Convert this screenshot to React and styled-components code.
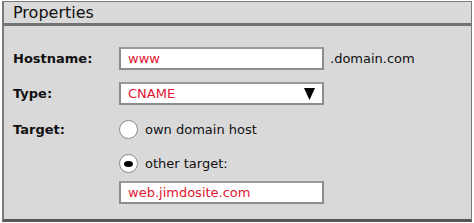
import React from 'react';
import styled, { createGlobalStyle } from 'styled-components';

const GlobalStyle = createGlobalStyle`
  body {
    margin: 0;
    background: #ffffff;
    font-family: "DejaVu Sans", Verdana, sans-serif;
  }
`;

const Panel = styled.div`
  margin: 1px 0 0 2px;
  width: 470px;
  height: 221px;
  box-sizing: border-box;
  background: #d9d9d9;
  border: 1px solid #7a7a7a;
  border-left: 2px solid #7a7a7a;
  border-bottom: 3px solid #555555;
  display: flex;
  flex-direction: column;
`;

const Header = styled.div`
  height: 21px;
  line-height: 21px;
  padding-left: 9px;
  font-size: 16px;
  color: #111;
  background: #dadada;
  border-bottom: 3px solid #737373;
`;

const Body = styled.div`
  padding: 21px 0 0 9px;
  display: flex;
  flex-direction: column;
`;

const Row = styled.div`
  display: flex;
  align-items: ${p => (p.top ? 'flex-start' : 'center')};
  margin-bottom: ${p => p.gap ?? 12}px;
`;

const Label = styled.div`
  width: 106px;
  flex: none;
  font-size: 13px;
  font-weight: bold;
  color: #111;
  line-height: 23px;
`;

const Field = styled.div`
  width: 205px;
  height: 23px;
  box-sizing: border-box;
  background: #fff;
  border: 2px solid #8c8c8c;
  border-top-color: #9a9a9a;
  padding: 0 7px;
  display: flex;
  align-items: center;
  justify-content: space-between;
  font-size: 13px;
  color: #e3162f;
`;

const Suffix = styled.span`
  margin-left: 6px;
  font-size: 13px;
  color: #111;
`;

const Options = styled.div`
  display: flex;
  flex-direction: column;
`;

const Option = styled.div`
  display: flex;
  align-items: center;
  height: 23px;
  margin-bottom: ${p => p.gap}px;
  font-size: 13px;
  color: #111;
`;

const Radio = styled.span`
  width: 19px;
  height: 19px;
  box-sizing: border-box;
  border-radius: 50%;
  background: #fff;
  border: 1px solid #8a8a8a;
  margin-right: 7px;
  display: flex;
  align-items: center;
  justify-content: center;
  &::after {
    content: '';
    display: ${p => (p.checked ? 'block' : 'none')};
    width: 9px;
    height: 6px;
    border-radius: 50%;
    background: #000;
  }
`;

const Arrow = () => (
  <svg width="11" height="12" viewBox="0 0 11 12">
    <polygon points="0,0 11,0 5.5,12" fill="#000" />
  </svg>
);

export default function App() {
  return (
    <>
      <GlobalStyle />
      <Panel>
        <Header>Properties</Header>
        <Body>
          <Row>
            <Label>Hostname:</Label>
            <Field>www</Field>
            <Suffix>.domain.com</Suffix>
          </Row>
          <Row gap={13}>
            <Label>Type:</Label>
            <Field>
              CNAME
              <Arrow />
            </Field>
          </Row>
          <Row top gap={0}>
            <Label>Target:</Label>
            <Options>
              <Option gap={11}>
                <Radio />
                own domain host
              </Option>
              <Option gap={6}>
                <Radio checked />
                other target:
              </Option>
              <Field>web.jimdosite.com</Field>
            </Options>
          </Row>
        </Body>
      </Panel>
    </>
  );
}
